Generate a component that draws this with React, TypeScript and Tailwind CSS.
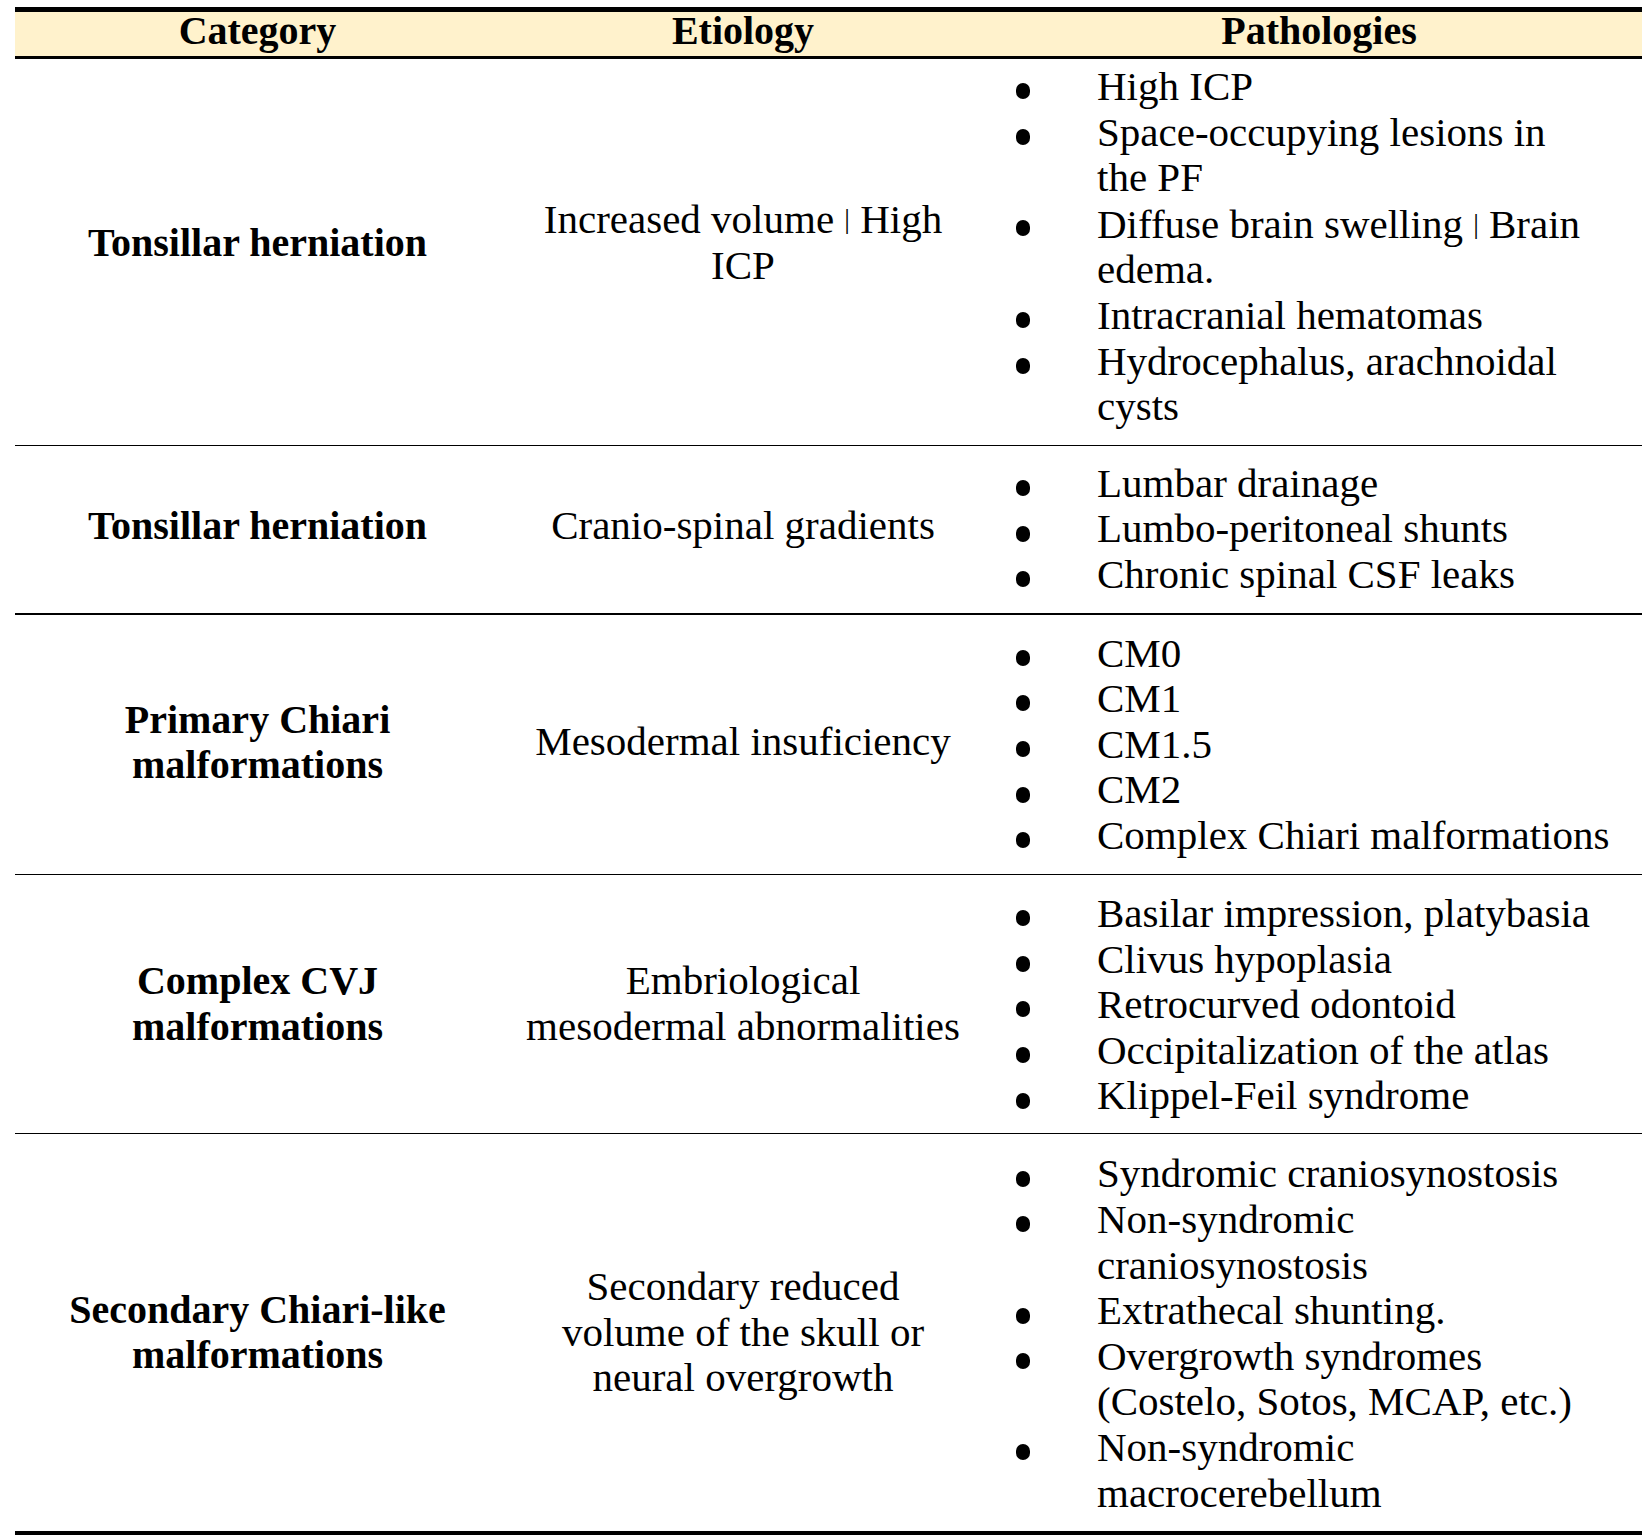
import React from 'react';

type Row = {
  category: string[];
  etiology: string[];
  items: string[][];
  cellPad: string;
  listPad: string;
  border: string;
};

const ROWS: Row[] = [
  {
    category: ['Tonsillar herniation'],
    etiology: ['Increased volume | High', 'ICP'],
    items: [
      ['High ICP'],
      ['Space-occupying lesions in', 'the PF'],
      ['Diffuse brain swelling | Brain', 'edema.'],
      ['Intracranial hematomas'],
      ['Hydrocephalus, arachnoidal', 'cysts'],
    ],
    cellPad: 'pt-[1px] pb-[20px]',
    listPad: 'pt-[5px] pb-[15px]',
    border: 'border-b border-black',
  },
  {
    category: ['Tonsillar herniation'],
    etiology: ['Cranio-spinal gradients'],
    items: [['Lumbar drainage'], ['Lumbo-peritoneal shunts'], ['Chronic spinal CSF leaks']],
    cellPad: 'pt-[12px] pb-[18px]',
    listPad: 'pt-[15px] pb-[15px]',
    border: 'border-b-2 border-black',
  },
  {
    category: ['Primary Chiari', 'malformations'],
    etiology: ['Mesodermal insuficiency'],
    items: [['CM0'], ['CM1'], ['CM1.5'], ['CM2'], ['Complex Chiari malformations']],
    cellPad: 'pt-[14px] pb-[18px]',
    listPad: 'pt-[16px] pb-[15.5px]',
    border: 'border-b border-black',
  },
  {
    category: ['Complex CVJ', 'malformations'],
    etiology: ['Embriological', 'mesodermal abnormalities'],
    items: [
      ['Basilar impression, platybasia'],
      ['Clivus hypoplasia'],
      ['Retrocurved odontoid'],
      ['Occipitalization of the atlas'],
      ['Klippel-Feil syndrome'],
    ],
    cellPad: 'pt-[15px] pb-[16px]',
    listPad: 'pt-[16px] pb-[14.5px]',
    border: 'border-b border-black',
  },
  {
    category: ['Secondary Chiari-like', 'malformations'],
    etiology: ['Secondary reduced', 'volume of the skull or', 'neural overgrowth'],
    items: [
      ['Syndromic craniosynostosis'],
      ['Non-syndromic', 'craniosynostosis'],
      ['Extrathecal shunting.'],
      ['Overgrowth syndromes', '(Costelo, Sotos, MCAP, etc.)'],
      ['Non-syndromic', 'macrocerebellum'],
    ],
    cellPad: 'pt-[16px] pb-[17px]',
    listPad: 'pt-[17px] pb-[15px]',
    border: 'border-b-4 border-black',
  },
];

// the thin "|" separators are shorter than the serif bar, so shrink them
function Text({ text }: { text: string }) {
  const parts = text.split('|');
  return (
    <>
      {parts.map((p, i) => (
        <React.Fragment key={i}>
          {i > 0 && <span className="align-[5px] text-[28px]">|</span>}
          {p}
        </React.Fragment>
      ))}
    </>
  );
}

export default function App() {
  return (
    <div className="min-h-[1539px] w-[1642px] overflow-hidden bg-white pt-[7px] font-['Liberation_Serif',serif] text-black">
      <div className="ml-[15px] w-[1637px]">
        {/* Header */}
        <div className="grid h-[52px] grid-cols-[485px_486px_666px] border-t-[5px] border-b-[3px] border-black bg-[#fff2cc] text-[40px] font-bold leading-[38px]">
          <div className="text-center">Category</div>
          <div className="text-center">Etiology</div>
          <div className="text-center">Pathologies</div>
        </div>

        {/* Body */}
        {ROWS.map((row, idx) => (
          <div key={idx} className={`grid grid-cols-[485px_486px_666px] ${row.border}`}>
            <div
              className={`flex flex-col justify-center text-center text-[40px] font-bold leading-[45.6px] whitespace-nowrap ${row.cellPad}`}
            >
              {row.category.map((l) => (
                <div key={l}>{l}</div>
              ))}
            </div>
            <div
              className={`flex flex-col justify-center text-center text-[41px] leading-[45.6px] whitespace-nowrap ${row.cellPad}`}
            >
              {row.etiology.map((l) => (
                <div key={l}>
                  <Text text={l} />
                </div>
              ))}
            </div>
            <div className={`text-[41px] leading-[45.6px] whitespace-nowrap ${row.listPad}`}>
              {row.items.map((lines, i) => (
                <div key={i} className="flex">
                  <div className="flex h-[45.6px] w-[111px] shrink-0 items-center pt-[9px] pl-[30px]">
                    <span className="block h-[16px] w-[14px] rounded-full bg-black" />
                  </div>
                  <div>
                    {lines.map((l) => (
                      <div key={l}>
                        <Text text={l} />
                      </div>
                    ))}
                  </div>
                </div>
              ))}
            </div>
          </div>
        ))}
      </div>
    </div>
  );
}
